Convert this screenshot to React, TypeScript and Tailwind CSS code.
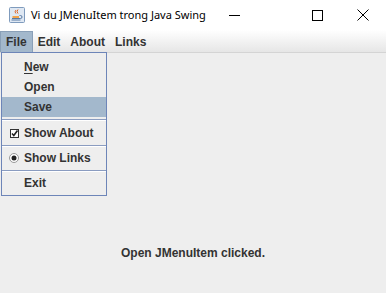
import { useState } from "react";

const items = ["New", "Open", "Save"];

function JavaIcon() {
  return (
    <svg width="16" height="16" viewBox="0 0 16 16">
      <rect x="0.5" y="0.5" width="15" height="15" rx="1" fill="#dfe8f3" stroke="#7f9bbd" />
      <path d="M3 11.5 h8.5 a1.5 1.5 0 0 0 0 -3 h-1" fill="none" stroke="#5a7aa3" strokeWidth="1" />
      <path d="M3.5 9 h6.5 v2 h-6.5 z" fill="#f3a34a" />
      <path d="M7 3 q-2 2 0 3.5 M9 2.5 q-2 2 0 4" fill="none" stroke="#e0672a" strokeWidth="1" />
      <path d="M2.5 13 h9" stroke="#5a7aa3" strokeWidth="1" />
    </svg>
  );
}

function Separator({ tall }: { tall?: boolean }) {
  return (
    <div className={`${tall ? "h-[6px]" : "h-[5px]"} flex flex-col justify-center`}>
      <div className="h-px bg-[#8a9cc0]" />
      <div className="h-px bg-white" />
    </div>
  );
}

export default function App() {
  const [status] = useState("Open JMenuItem clicked.");

  return (
    <div
      className="w-[386px] h-[293px] flex flex-col bg-[#eeeeee] relative overflow-hidden text-[#333333]"
      style={{ fontFamily: '"Liberation Sans", Arial, sans-serif' }}
    >
      {/* title bar */}
      <div className="h-[30px] bg-white flex items-center shrink-0">
        <div className="pl-[9px] pr-[6px] flex items-center shrink-0">
          <JavaIcon />
        </div>
        <span
          className="text-[11px] text-black whitespace-nowrap flex-1 min-w-0"
          style={{ fontFamily: '"Noto Sans", "Open Sans", sans-serif' }}
        >
          Vi du JMenuItem trong Java Swing
        </span>
        <div className="flex items-center h-full shrink-0">
          <div className="w-[46px] h-full flex items-center justify-center">
            <div className="w-[11px] h-px bg-black" />
          </div>
          <div className="w-[46px] h-full flex items-center justify-center ml-[37px]">
            <div className="w-[11px] h-[11px] border border-black" />
          </div>
          <div className="w-[46px] h-full flex items-center justify-center">
            <svg width="12" height="12" viewBox="0 0 12 12">
              <path d="M0.5 0.5 L11.5 11.5 M11.5 0.5 L0.5 11.5" stroke="black" strokeWidth="1" />
            </svg>
          </div>
        </div>
      </div>

      {/* menu bar */}
      <div className="h-[23px] shrink-0 flex items-end bg-gradient-to-b from-white to-[#e6e6e6] border-b border-[#d4d4d4] text-[12px] font-bold">
        <div className="h-[21px] px-[5px] flex items-center bg-[#a3b8cc] border border-[#8aa0b8] border-b-0">
          File
        </div>
        <div className="h-[21px] px-[5px] flex items-center">Edit</div>
        <div className="h-[21px] px-[5px] flex items-center">About</div>
        <div className="h-[21px] px-[5px] flex items-center">Links</div>
      </div>

      {/* body */}
      <div className="flex-1 flex flex-col justify-end items-center pb-[31px]">
        <span className="text-[12px] font-bold">{status}</span>
      </div>

      {/* popup menu */}
      <div className="absolute left-[1px] top-[52px] w-[106px] bg-[#eeeeee] border border-[#6d85b8] pt-[4px] pb-[2px] text-[12px] font-bold">
        {items.map((it) => (
          <div
            key={it}
            className={`h-[20px] flex items-center pl-[22px] ${it === "Save" ? "bg-[#a3b8cc]" : ""}`}
          >
            {it === "New" ? (
              <span>
                <span className="underline underline-offset-2">N</span>ew
              </span>
            ) : (
              it
            )}
          </div>
        ))}
        <Separator tall />
        <div className="h-[20px] flex items-center pl-[8px] gap-[5px]">
          <svg width="9" height="9" viewBox="0 0 9 9">
            <rect x="0.5" y="0.5" width="8" height="8" fill="white" stroke="#333" />
            <path d="M2 4.5 L3.8 6.5 L7.5 1.5" fill="none" stroke="#222" strokeWidth="1.6" />
          </svg>
          <span>Show About</span>
        </div>
        <Separator />
        <div className="h-[20px] flex items-center pl-[7px] gap-[5px]">
          <svg width="10" height="10" viewBox="0 0 10 10">
            <circle cx="5" cy="5" r="4.5" fill="white" stroke="#999" />
            <circle cx="5" cy="5" r="2.5" fill="#222" />
          </svg>
          <span>Show Links</span>
        </div>
        <Separator />
        <div className="h-[20px] flex items-center pl-[22px]">Exit</div>
      </div>
    </div>
  );
}
